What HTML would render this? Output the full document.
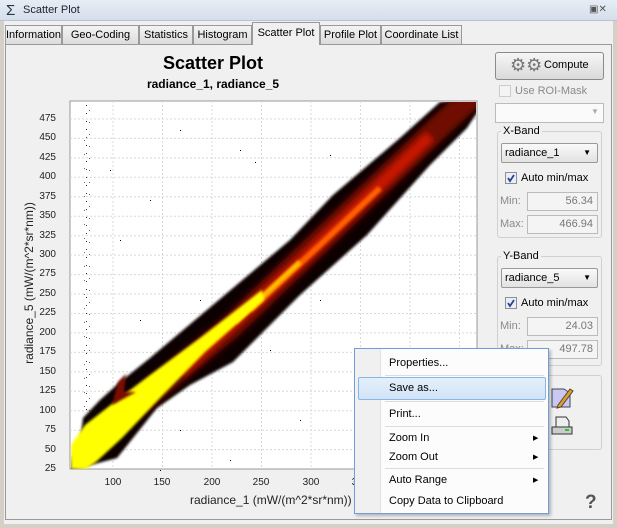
<!DOCTYPE html>
<html><head><meta charset="utf-8"><style>
*{margin:0;padding:0;box-sizing:border-box}
body{width:617px;height:528px;overflow:hidden;background:#d4d0c8;font-family:"Liberation Sans",sans-serif;font-size:11px;color:#000;position:relative}
.a{position:absolute}
.tab{position:absolute;top:25px;height:19px;border:1px solid #999;border-bottom:none;background:linear-gradient(#f4f4f4,#dcdcdc);font-size:11px;line-height:18px;text-align:center}
.lbl{position:absolute;font-size:11px;white-space:nowrap}
.grey{color:#8a8a8a}
.field{position:absolute;border:1px solid #bbb;background:#f4f4f4;color:#777;text-align:right;padding-right:4px;line-height:17px;font-size:11px}
.combo{position:absolute;border:1px solid #999;border-radius:2px;background:linear-gradient(#fafafa,#e2e2e2);line-height:18px;padding-left:3px;font-size:11px}
.grp{position:absolute;border:1px solid #d0d0d0;border-radius:3px}
.cb{position:absolute;width:12px;height:12px;border:1px solid #8e8f8f;background:#e8eef8}
.mi{position:absolute;left:34px;font-size:11px}
.sep{position:absolute;left:30px;right:4px;height:1px;background:#dcdcdc}
.tk{position:absolute;font-size:10px;color:#222;width:26px;text-align:right;left:30px}
.xt{position:absolute;font-size:10px;color:#222;top:477px;width:30px;text-align:center}
</style></head><body>
<div class="a" style="left:0;top:0;width:617px;height:21px;background:linear-gradient(#e6edf5,#d5dfeb);border-bottom:1px solid #b9c4d2"></div>
<div class="a" style="left:6px;top:2px;font-size:15px;color:#234">&Sigma;</div>
<div class="a" style="left:23px;top:4px;font-size:11px;color:#223">Scatter Plot</div>
<div class="a" style="left:589px;top:4px;font-size:10px;color:#555">&#9635;&#10005;</div>
<div class="a" style="left:4px;top:21px;width:609px;height:503px;background:#f0f0f0"></div>
<div class="tab" style="left:5px;width:57px">Information</div>
<div class="tab" style="left:62px;width:77px">Geo-Coding</div>
<div class="tab" style="left:139px;width:54px">Statistics</div>
<div class="tab" style="left:193px;width:59px">Histogram</div>
<div class="tab" style="left:320px;width:61px">Profile Plot</div>
<div class="tab" style="left:381px;width:81px">Coordinate List</div>
<div class="tab" style="left:252px;top:22px;height:23px;width:68px;background:#f0f0f0;line-height:20px;z-index:2">Scatter Plot</div>
<div class="a" style="left:5px;top:44px;width:607px;height:476px;border:1px solid #999;background:#f0f0f0"></div>

<div class="a" style="left:100px;top:53px;width:226px;text-align:center;font-size:18px;font-weight:bold">Scatter Plot</div>
<div class="a" style="left:100px;top:77px;width:226px;text-align:center;font-size:12px;font-weight:bold">radiance_1, radiance_5</div>

<svg class="a" style="left:0;top:0" width="617" height="528">
<defs>
<filter id="b" x="-20%" y="-20%" width="140%" height="140%"><feGaussianBlur stdDeviation="3"/></filter>
<filter id="b2" x="-10%" y="-10%" width="120%" height="120%"><feGaussianBlur stdDeviation="1.2"/></filter>
<clipPath id="c"><rect x="71" y="102" width="405" height="367"/></clipPath>
</defs>
<rect x="70" y="101" width="407" height="368" fill="#fff" stroke="#999"/>
<g stroke="#d8d8d8" stroke-dasharray="2,2" stroke-width="1">
<path d="M113 101V469M162.5 101V469M212 101V469M261.5 101V469M311 101V469M360.5 101V469M410 101V469M459.5 101V469"/>
<path d="M70 119H477M70 138.4H477M70 157.9H477M70 177.3H477M70 196.8H477M70 216.2H477M70 235.7H477M70 255.1H477M70 274.6H477M70 294H477M70 313.5H477M70 332.9H477M70 352.4H477M70 371.8H477M70 391.3H477M70 410.7H477M70 430.2H477M70 449.6H477"/>
</g>
<g stroke="#000" stroke-width="1" fill="none">
<path d="M86.5 105V465" stroke-dasharray="1,7" opacity=".8"/>
<path d="M89.5 110V460" stroke-dasharray="1,11" opacity=".6"/>
<path d="M84.5 140V440" stroke-dasharray="1,13" opacity=".6"/>
</g>
<g fill="#000">
<rect x="150" y="200" width="1" height="1"/><rect x="180" y="130" width="1" height="1"/><rect x="240" y="150" width="1" height="1"/><rect x="120" y="240" width="1" height="1"/><rect x="200" y="300" width="1" height="1"/><rect x="270" y="350" width="1" height="1"/><rect x="300" y="420" width="1" height="1"/><rect x="230" y="460" width="1" height="1"/><rect x="180" y="430" width="1" height="1"/><rect x="160" y="470" width="1" height="1"/><rect x="320" y="300" width="1" height="1"/><rect x="110" y="170" width="1" height="1"/><rect x="140" y="320" width="1" height="1"/><rect x="255" y="162" width="1" height="1"/><rect x="330" y="155" width="1" height="1"/>
</g>
<g clip-path="url(#c)" fill="none" stroke-linejoin="round">
<polygon points="480,98 440,102 400,138 333,195 290,240 233,288 150,358 120,382 100,400 83,418 80,442 72,458 70,470 87,466 117,458 157,408 190,385 233,362 300,295 367,235 430,165 467,128 480,108" fill="#0a0000" filter="url(#b2)"/>
<path d="M120 418L233 325L440 126L490 80" stroke="#6e0800" stroke-width="24" filter="url(#b)"/>
<path d="M180 372L300 262L430 136" stroke="#c81800" stroke-width="12" filter="url(#b)"/>
<path d="M250 310L320 245L380 188" stroke="#ff6000" stroke-width="6" filter="url(#b2)"/>
<path d="M235 322L300 262" stroke="#ffc000" stroke-width="5" filter="url(#b2)"/>
<polygon points="71,469 71,445 85,425 117,400 150,375 200,338 262,290 264,300 205,352 160,398 122,438 96,462 86,469" fill="#ffff00" filter="url(#b2)"/>
<polygon points="112,405 118,382 126,374 124,392 136,392" fill="#7a0800" filter="url(#b2)"/>
</g>
</svg>

<div class="tk" style="top:113px">475</div><div class="tk" style="top:132px">450</div><div class="tk" style="top:152px">425</div><div class="tk" style="top:171px">400</div><div class="tk" style="top:191px">375</div><div class="tk" style="top:210px">350</div><div class="tk" style="top:230px">325</div><div class="tk" style="top:249px">300</div><div class="tk" style="top:268px">275</div><div class="tk" style="top:288px">250</div><div class="tk" style="top:307px">225</div><div class="tk" style="top:327px">200</div><div class="tk" style="top:346px">175</div><div class="tk" style="top:366px">150</div><div class="tk" style="top:385px">125</div><div class="tk" style="top:405px">100</div><div class="tk" style="top:424px">75</div><div class="tk" style="top:444px">50</div><div class="tk" style="top:463px">25</div>
<div class="xt" style="left:98px">100</div><div class="xt" style="left:147px">150</div><div class="xt" style="left:197px">200</div><div class="xt" style="left:246px">250</div><div class="xt" style="left:296px">300</div><div class="xt" style="left:345px">350</div>
<div class="a" style="left:190px;top:493px;font-size:12px;color:#222">radiance_1 (mW/(m^2*sr*nm))</div>
<div class="a" style="left:-56px;top:276px;width:170px;text-align:center;font-size:12px;color:#222;transform:rotate(-90deg)">radiance_5 (mW/(m^2*sr*nm))</div>

<div class="a" style="left:495px;top:52px;width:109px;height:28px;border:1px solid #8a8a8a;border-radius:3px;background:linear-gradient(#f6f6f6,#dadada)"></div>
<div class="a" style="left:510px;top:55px;font-size:18px;color:#777">&#9881;&#9881;</div>
<div class="lbl" style="left:544px;top:59px;font-size:11px">Compute</div>
<div class="cb" style="left:499px;top:85px;background:#f4f4f4;border-color:#ccc"></div>
<div class="lbl grey" style="left:515px;top:85px">Use ROI-Mask</div>
<div class="a" style="left:495px;top:103px;width:109px;height:20px;border:1px solid #bbb;background:#fafafa"></div>
<div class="a" style="left:591px;top:107px;font-size:8px;color:#aaa">&#9660;</div>

<div class="grp" style="left:497px;top:131px;width:105px;height:107px"></div>
<div class="lbl" style="left:501px;top:125px;background:#f0f0f0;padding:0 2px">X-Band</div>
<div class="combo" style="left:501px;top:143px;width:97px;height:20px">radiance_1<span style="position:absolute;right:6px;top:0;font-size:8px">&#9660;</span></div>
<div class="cb" style="left:505px;top:172px">
<svg width="10" height="10" style="position:absolute;left:0;top:0"><path d="M2 5l2 3 4-6" stroke="#2a3f8f" stroke-width="1.8" fill="none"/></svg></div>
<div class="lbl" style="left:521px;top:172px">Auto min/max</div>
<div class="lbl grey" style="left:500px;top:195px">Min:</div>
<div class="field" style="left:527px;top:192px;width:71px;height:19px">56.34</div>
<div class="lbl grey" style="left:500px;top:218px">Max:</div>
<div class="field" style="left:527px;top:215px;width:71px;height:19px">466.94</div>

<div class="grp" style="left:497px;top:256px;width:105px;height:110px"></div>
<div class="lbl" style="left:501px;top:250px;background:#f0f0f0;padding:0 2px">Y-Band</div>
<div class="combo" style="left:501px;top:268px;width:97px;height:20px">radiance_5<span style="position:absolute;right:6px;top:0;font-size:8px">&#9660;</span></div>
<div class="cb" style="left:505px;top:297px">
<svg width="10" height="10" style="position:absolute;left:0;top:0"><path d="M2 5l2 3 4-6" stroke="#2a3f8f" stroke-width="1.8" fill="none"/></svg></div>
<div class="lbl" style="left:521px;top:297px">Auto min/max</div>
<div class="lbl grey" style="left:500px;top:320px">Min:</div>
<div class="field" style="left:527px;top:317px;width:71px;height:19px">24.03</div>
<div class="lbl grey" style="left:500px;top:343px">Max:</div>
<div class="field" style="left:527px;top:340px;width:71px;height:19px">497.78</div>

<div class="grp" style="left:497px;top:375px;width:105px;height:75px"></div>
<svg class="a" style="left:550px;top:385px" width="26" height="52">
<path d="M2 4h12l6 4v14H2z" fill="#c8c8f0" stroke="#445"/><path d="M8 20l12-16 3 2-12 16-4 1z" fill="#d9a030" stroke="#543"/>
<path d="M6 32h10l3 4v6H6z" fill="#eee" stroke="#333"/><rect x="2" y="42" width="20" height="7" fill="#ccc" stroke="#333"/><rect x="15" y="44" width="4" height="2" fill="#2c2"/>
</svg>
<div class="a" style="left:585px;top:492px;font-size:19px;font-weight:bold;color:#555">?</div>

<div class="a" style="left:354px;top:348px;width:195px;height:166px;border:1px solid #6f9fd8;background:#fcfcfc;box-shadow:2px 2px 3px rgba(0,0,0,.25)">
<div class="a" style="left:0;top:0;width:26px;height:164px;background:#f0f0f0;border-right:1px solid #e2e2e2"></div>
<div class="mi" style="top:8px">Properties...</div>
<div class="sep" style="top:26px"></div>
<div class="a" style="left:3px;top:28px;width:188px;height:23px;border:1px solid #86b5e8;border-radius:2px;background:linear-gradient(#e4effb,#d2e4f7)"></div>
<div class="mi" style="top:33px">Save as...</div>
<div class="sep" style="top:52px"></div>
<div class="mi" style="top:59px">Print...</div>
<div class="sep" style="top:77px"></div>
<div class="mi" style="top:83px">Zoom In</div><div class="a" style="left:178px;top:85px;font-size:7px">&#9654;</div>
<div class="mi" style="top:102px">Zoom Out</div><div class="a" style="left:178px;top:104px;font-size:7px">&#9654;</div>
<div class="sep" style="top:119px"></div>
<div class="mi" style="top:125px">Auto Range</div><div class="a" style="left:178px;top:127px;font-size:7px">&#9654;</div>
<div class="mi" style="top:146px">Copy Data to Clipboard</div>
</div>
</body></html>
